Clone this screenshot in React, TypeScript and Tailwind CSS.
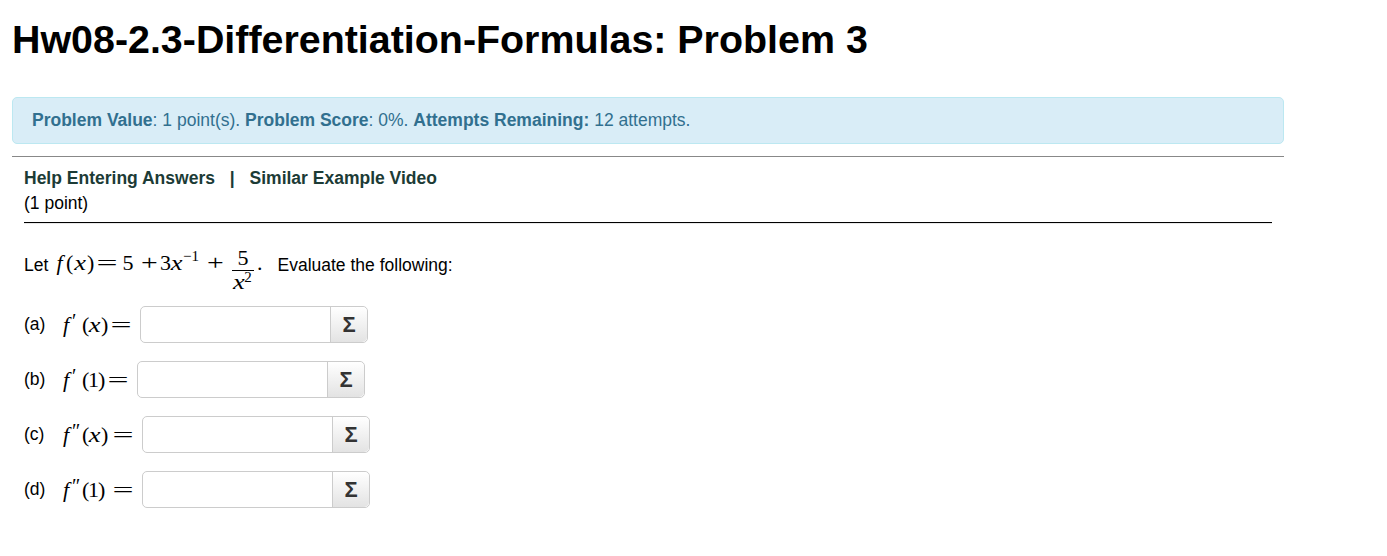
import { clsx } from 'clsx'

const serif = "font-['Liberation_Serif',serif]"

function V({ children, className }: { children: React.ReactNode; className?: string }) {
  return <span className={clsx('inline-block text-center italic', className)}>{children}</span>
}

// operator glyphs are stretched to match the wider TeX symbols
function Op({ children, className }: { children: React.ReactNode; className?: string }) {
  return <span className={clsx('inline-block text-center', className)}>{children}</span>
}

function AnswerBox() {
  return (
    <div className="flex h-[37px] w-[228px] rounded-[5px] border border-[#cccccc] bg-white">
      <div className="flex-1" />
      <button className="flex w-[37px] items-center justify-center rounded-r-[5px] border-l border-[#cccccc] bg-gradient-to-b from-white to-[#e3e3e3] text-[22px] font-bold text-[#333]">
        Σ
      </button>
    </div>
  )
}

const parts = [
  { label: '(a)', w: 'w-[116px]', prime: '′', arg: 'x' },
  { label: '(b)', w: 'w-[113px]', prime: '′', arg: '1' },
  { label: '(c)', w: 'w-[118px]', prime: '″', arg: 'x' },
  { label: '(d)', w: 'w-[118px]', prime: '″', arg: '1' },
]

export default function App() {
  return (
    <div className="min-h-[556px] bg-white font-['Liberation_Sans',Arial,sans-serif] text-[17.5px] leading-[25px] text-[#333]">
      <div className="w-[1284px] pl-3 pt-[18px]">
        <h1 className="text-[39.4px] font-bold leading-[43px] text-black">
          Hw08-2.3-Differentiation-Formulas: Problem 3
        </h1>

        {/* score bar */}
        <div className="mt-9 rounded-[5px] border border-[#bce8f1] bg-[#d9edf7] px-[19px] py-[10px] text-[#31708f]">
          <b>Problem Value</b>: 1 point(s). <b>Problem Score</b>: 0%. <b>Attempts Remaining:</b> 12 attempts.
        </div>

        <div className="mt-3 border-t border-[#888]" />

        <div className="px-3 pt-[9px]">
          <div className="font-bold text-[#1c3b36]">
            Help Entering Answers <span className="mx-[10px]">|</span> Similar Example Video
          </div>
          <div className="text-black">(1 point)</div>
          <div className="mt-[6px] border-t border-b border-t-black border-b-[#e8e8e8]" />

          {/* problem statement */}
          <div className="mt-[16px] flex h-[50px] items-center text-black">
            <span className="w-[29px]">Let</span>
            <span className={clsx(serif, 'text-[22px] leading-[25px]')}>
              <V className="w-[13px]">f</V>
              <Op className="w-[7px]">(</Op>
              <V className="w-[14px] scale-x-[1.2]">x</V>
              <Op className="w-[10px] text-left">)</Op>
              <Op className="w-[20px] scale-x-[1.7]">=</Op>
              <Op className="ml-[5px] w-[12px]">5</Op>
              <Op className="ml-[8px] w-[15px] scale-x-[1.35]">+</Op>
              <Op className="ml-[3px] w-[10px]">3</Op>
              <V className="w-[13px] scale-x-[1.2]">x</V>
              <span className="relative -top-[9px] inline-block w-[17px] text-[15px]">−1</span>
              <Op className="ml-[8px] w-[15px] scale-x-[1.35]">+</Op>
              <span className="relative top-[3px] ml-[9px] inline-flex w-[22px] flex-col items-center align-middle text-[22px]">
                <span className="h-[25px] leading-[25px]">5</span>
                <span className="w-full border-t border-black" />
                <span className="h-[21px] leading-[21px]">
                  <span className="inline-block scale-x-[1.2] italic">x</span>
                  <span className="relative -top-[7px] text-[15px]">2</span>
                </span>
              </span>
              <span className="ml-[3px]">.</span>
            </span>
            <span className="ml-[15px]">Evaluate the following:</span>
          </div>

          {/* answers */}
          <div className="mt-[16px] flex flex-col gap-[18px]">
            {parts.map((p) => (
              <div key={p.label} className="flex h-[37px] items-center text-black">
                <div className={clsx(p.w, 'flex items-center')}>
                  <span className="w-[36px]">{p.label}</span>
                  <span className={clsx(serif, 'text-[22px]')}>
                    <V className="w-[12px]">f</V>
                    <span className="relative -top-[4px] inline-block w-[10px] text-[20px]">{p.prime}</span>
                    <Op className="w-[6px]">(</Op>
                    {p.arg === 'x' ? <V className="w-[13px] scale-x-[1.2]">x</V> : <Op className="w-[10px]">1</Op>}
                    <Op className="w-[7px]">)</Op>
                  </span>
                  <Op className={clsx(serif, 'ml-auto mr-[10px] w-[18px] scale-x-[1.7] text-[22px]')}>=</Op>
                </div>
                <AnswerBox />
              </div>
            ))}
          </div>
        </div>
      </div>
    </div>
  )
}
